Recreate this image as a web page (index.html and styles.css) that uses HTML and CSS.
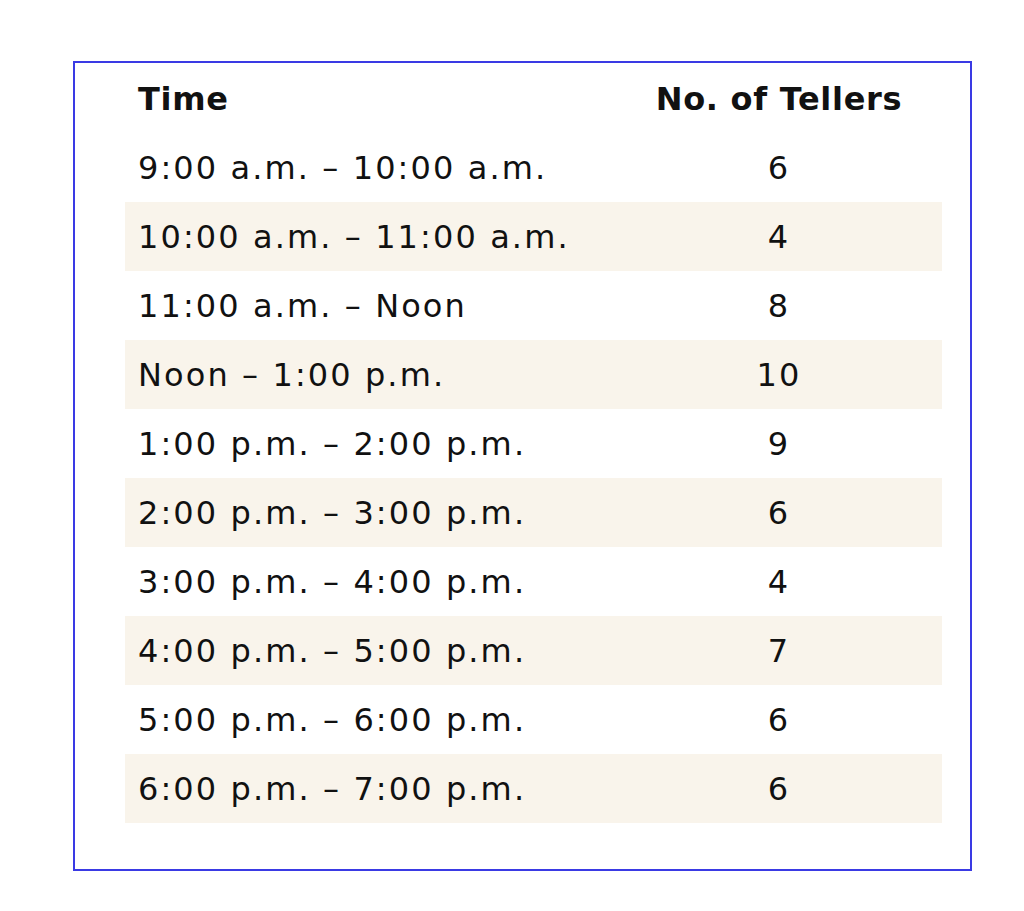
FILE: index.html
```html
<!DOCTYPE html>
<html>
<head>
<meta charset="utf-8">
<link rel="stylesheet" href="styles.css">
</head>
<body>
<div class="box">
  <table class="tellers">
    <thead>
      <tr><th class="c-time">Time</th><th class="c-num">No. of Tellers</th></tr>
    </thead>
    <tbody>
      <tr><td class="c-time">9:00 a.m. – 10:00 a.m.</td><td class="c-num">6</td></tr>
      <tr><td class="c-time">10:00 a.m. – 11:00 a.m.</td><td class="c-num">4</td></tr>
      <tr><td class="c-time">11:00 a.m. – Noon</td><td class="c-num">8</td></tr>
      <tr><td class="c-time">Noon – 1:00 p.m.</td><td class="c-num">10</td></tr>
      <tr><td class="c-time">1:00 p.m. – 2:00 p.m.</td><td class="c-num">9</td></tr>
      <tr><td class="c-time">2:00 p.m. – 3:00 p.m.</td><td class="c-num">6</td></tr>
      <tr><td class="c-time">3:00 p.m. – 4:00 p.m.</td><td class="c-num">4</td></tr>
      <tr><td class="c-time">4:00 p.m. – 5:00 p.m.</td><td class="c-num">7</td></tr>
      <tr><td class="c-time">5:00 p.m. – 6:00 p.m.</td><td class="c-num">6</td></tr>
      <tr><td class="c-time">6:00 p.m. – 7:00 p.m.</td><td class="c-num">6</td></tr>
    </tbody>
  </table>
</div>
</body>
</html>
```

FILE: styles.css
```css
html, body {
  margin: 0;
  padding: 0;
  background: #ffffff;
}
body {
  font-family: "DejaVu Sans", Verdana, sans-serif;
  color: #111111;
}
.box {
  box-sizing: border-box;
  margin: 61px 0 0 73px;
  width: 899px;
  height: 810px;
  border: 2px solid #3a3ae4;
  padding: 1px 28px 0 50px;
}
.tellers {
  width: 817px;
  border-collapse: collapse;
  border-spacing: 0;
}
.tellers th,
.tellers td {
  height: 69px;
  padding: 0;
  vertical-align: middle;
}
.tellers th {
  font-weight: bold;
  font-size: 32px;
  letter-spacing: 0.7px;
}
.tellers td {
  font-size: 32px;
  letter-spacing: 2.1px;
}
.c-time {
  width: 478px;
  padding-left: 13px !important;
  text-align: left;
}
.c-num {
  text-align: center;
}
.tellers tbody tr:nth-child(even) {
  background: #f9f4eb;
}
```
